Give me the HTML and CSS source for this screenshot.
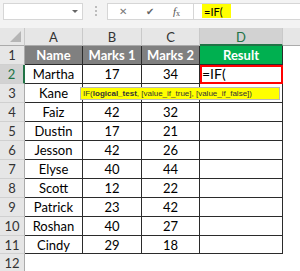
FILE: index.html
```html
<!DOCTYPE html>
<html lang="en">
<head>
    <meta charset="UTF-8">
    <meta name="viewport" content="width=device-width, initial-scale=1.0">
    <title>IF formula</title>
    <link rel="stylesheet" href="styles.css">
</head>
<body>
    <div class="toolbar">
        <div class="name-box"><span class="drop"></span></div>
        <div class="grip"><i></i><i></i><i></i></div>
        <div class="formula-bar">
            <div class="buttons">
                <span class="btn x">&#x2715;</span>
                <span class="btn ok">&#x2714;</span>
                <span class="btn fx"><i>f</i><sub>x</sub></span>
            </div>
            <div class="input"><span class="hl">=IF(</span></div>
        </div>
    </div>

    <div class="sheet">
        <!-- column headers -->
        <div class="corner"></div>
        <div class="col-head">A</div>
        <div class="col-head">B</div>
        <div class="col-head">C</div>
        <div class="col-head sel">D</div>
        <div class="col-head last"></div>

        <!-- row 1 -->
        <div class="row-head">1</div>
        <div class="cell th">Name</div>
        <div class="cell th">Marks 1</div>
        <div class="cell th">Marks 2</div>
        <div class="cell th green">Result</div>
        <div class="empty"></div>

        <!-- row 2 -->
        <div class="row-head sel">2</div>
        <div class="cell">Martha</div>
        <div class="cell">17</div>
        <div class="cell">34</div>
        <div class="cell active">=IF(</div>
        <div class="empty"></div>

        <div class="row-head">3</div>
        <div class="cell">Kane</div>
        <div class="cell"></div>
        <div class="cell"></div>
        <div class="cell"></div>
        <div class="empty"></div>

        <div class="row-head">4</div>
        <div class="cell">Faiz</div>
        <div class="cell">42</div>
        <div class="cell">32</div>
        <div class="cell"></div>
        <div class="empty"></div>

        <div class="row-head">5</div>
        <div class="cell">Dustin</div>
        <div class="cell">17</div>
        <div class="cell">21</div>
        <div class="cell"></div>
        <div class="empty"></div>

        <div class="row-head">6</div>
        <div class="cell">Jesson</div>
        <div class="cell">42</div>
        <div class="cell">26</div>
        <div class="cell"></div>
        <div class="empty"></div>

        <div class="row-head">7</div>
        <div class="cell">Elyse</div>
        <div class="cell">40</div>
        <div class="cell">44</div>
        <div class="cell"></div>
        <div class="empty"></div>

        <div class="row-head">8</div>
        <div class="cell">Scott</div>
        <div class="cell">12</div>
        <div class="cell">22</div>
        <div class="cell"></div>
        <div class="empty"></div>

        <div class="row-head">9</div>
        <div class="cell">Patrick</div>
        <div class="cell">23</div>
        <div class="cell">42</div>
        <div class="cell"></div>
        <div class="empty"></div>

        <div class="row-head">10</div>
        <div class="cell">Roshan</div>
        <div class="cell">40</div>
        <div class="cell">27</div>
        <div class="cell"></div>
        <div class="empty"></div>

        <div class="row-head">11</div>
        <div class="cell">Cindy</div>
        <div class="cell">29</div>
        <div class="cell">18</div>
        <div class="cell"></div>
        <div class="empty"></div>

        <div class="row-head">12</div>
        <div class="empty"></div>
        <div class="empty"></div>
        <div class="empty"></div>
        <div class="empty"></div>
        <div class="empty"></div>

        <!-- function tooltip -->
        <div class="tip">IF(<b>logical_test</b>, [value_if_true], [value_if_false])</div>
    </div>
</body>
</html>
```

FILE: styles.css
```css
/* excel look */
body {
    margin: 0;
    background: #fff;
    font-family: Lato, "Open Sans", sans-serif;
    color: #000;
}

.toolbar {
    display: flex;
    align-items: center;
    height: 22px;
    padding: 0 0 0 3px;
    background: #f3f3f3;
    border-bottom: 6px solid #f3f3f3;
}
.name-box {
    position: relative;
    width: 78px;
    height: 15px;
    background: #fff;
    border: 1px solid #d6d6d6;
}
.drop {
    position: absolute;
    right: 4px;
    top: 6px;
    border-left: 3px solid transparent;
    border-right: 3px solid transparent;
    border-top: 3px solid #666;
}
.grip {
    display: flex;
    flex-direction: column;
    gap: 2px;
    margin: 0 10px 0 12px;
}
.grip i {
    width: 2px;
    height: 2px;
    background: #bdbdbd;
}
.formula-bar {
    flex: 1;
    display: flex;
    height: 15px;
    background: #fff;
    border: 1px solid #d6d6d6;
    border-right: none;
}
.buttons {
    width: 85px;
    display: flex;
    align-items: center;
    border-right: 1px solid #d6d6d6;
    color: #777;
}
.btn {
    font-size: 10px;
}
.x { margin-left: 11px; }
.ok { margin-left: 19px; color: #666; }
.fx {
    margin-left: 19px;
    font-family: "Liberation Serif", serif;
    font-size: 11px;
    color: #555;
}
.fx sub { font-size: 8px; vertical-align: -1px; }
.input {
    padding-left: 8px;
    font-size: 11px;
    line-height: 15px;
}
.hl {
    display: inline-block;
    background: #ffff00;
    padding: 0 8px 0 2px;
    height: 14px;
}

.sheet {
    position: relative;
    display: grid;
    grid-template-columns: 25px 58px 59px 58px 83px 1fr;
    grid-template-rows: 18px repeat(10, 19px) 18px 19px;
}
.corner {
    position: relative;
    background: #e6e6e6;
    border-right: 1px solid #c9c9c9;
    border-bottom: 1px solid #ababab;
}
.corner::after {
    content: "";
    position: absolute;
    right: 3px;
    bottom: 3px;
    border-left: 11px solid transparent;
    border-bottom: 11px solid #b5b5b5;
}
.col-head {
    background: #e6e6e6;
    border-right: 1px solid #c9c9c9;
    border-bottom: 1px solid #ababab;
    font-size: 13px;
    color: #333;
    text-align: center;
    line-height: 18px;
}
.col-head.sel {
    background: #d2d2d2;
    color: #217346;
    border-bottom: 2px solid #217346;
}
.col-head.last { border-right: none; }
.row-head {
    background: #e6e6e6;
    border-right: 1px solid #ababab;
    border-bottom: 1px solid #d0d0d0;
    font-size: 13px;
    color: #333;
    text-align: center;
    line-height: 18px;
}
.row-head.sel {
    background: #d2d2d2;
    color: #217346;
    border-right: 2px solid #217346;
}
.cell {
    border-right: 1px solid #2b2b2b;
    border-bottom: 1px solid #2b2b2b;
    font-size: 13px;
    text-align: center;
    line-height: 18px;
}
.th {
    background: #808080;
    color: #fff;
    font-weight: bold;
}
.green { background: #00b050; }
.active {
    text-align: left;
    outline: 2px solid #ff0000;
    outline-offset: -2px;
    padding-left: 2px;
    font-size: 14px;
}

.tip {
    position: absolute;
    left: 80px;
    top: 59px;
    width: 196px;
    height: 11px;
    padding-left: 2px;
    background: #ffff00;
    border: 1px solid #b8b8b8;
    font-family: "Liberation Sans", sans-serif;
    font-size: 8px;
    line-height: 11px;
    color: #333;
    white-space: nowrap;
}
```
